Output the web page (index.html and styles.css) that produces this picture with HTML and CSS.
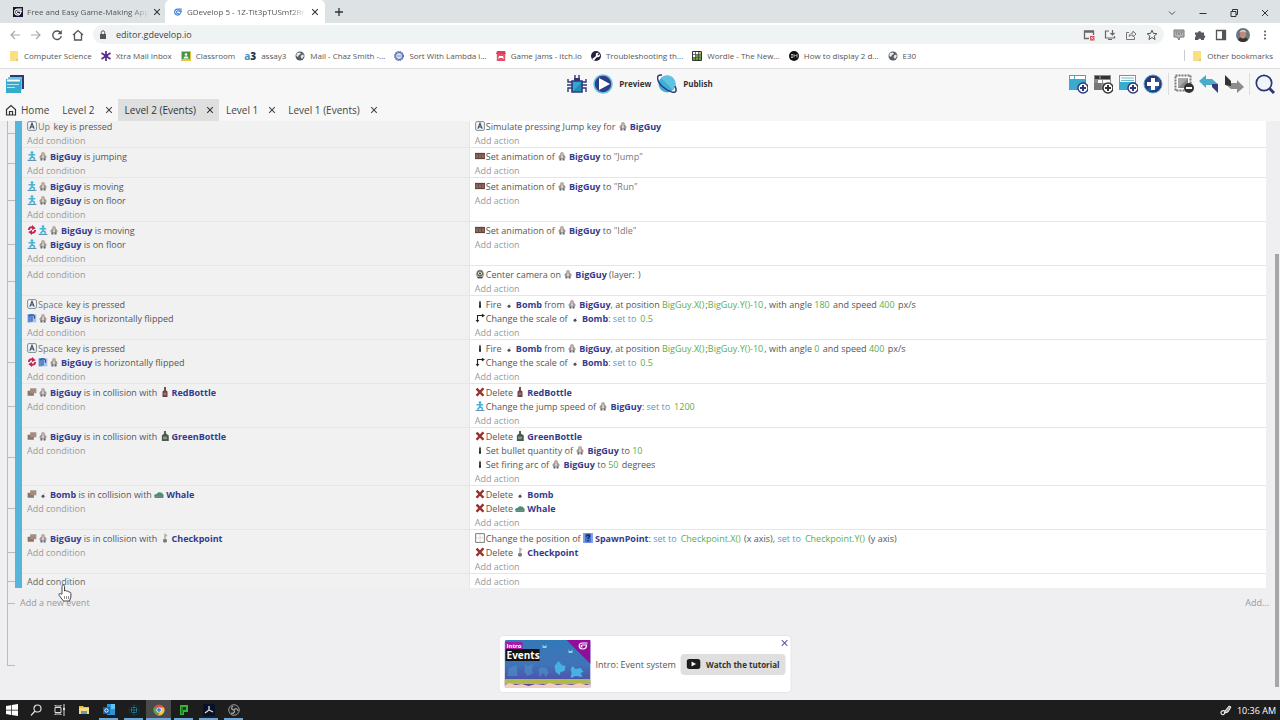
FILE: index.html
```html
<!DOCTYPE html>
<html lang="en">
<head>
    <meta charset="UTF-8">
    <meta name="viewport" content="width=device-width, initial-scale=1.0">
    <title>GDevelop 5</title>
    <link rel="stylesheet" href="styles.css">
</head>
<body>

    <!-- Shared icons -->
    <svg class="sprite" aria-hidden="true">
        <symbol id="x" viewBox="0 0 10 10"><path d="M1.5 1.5l7 7M8.5 1.5l-7 7" fill="none" stroke="currentColor" stroke-width="1.3"/></symbol>
        <symbol id="key" viewBox="0 0 16 16"><rect x="1" y="1" width="14" height="14" rx="2" fill="#f4f7fa" stroke="#77828c" stroke-width="1.5"/><path d="M4.5 12.5L8 3.5l3.500 9M6 9.5h4" fill="none" stroke="#34495c" stroke-width="1.7"/></symbol>
        <symbol id="run" viewBox="0 0 16 16"><path d="M1 15h14" stroke="#4a86ad" stroke-width="1.6"/><circle cx="8" cy="2.5" r="2.2" fill="#45b2d8"/><path d="M8 4v5l3.500 2v3M8 9l-4 4.500M2.500 6H13" fill="none" stroke="#45b2d8" stroke-width="2.6"/></symbol>
        <symbol id="guy" viewBox="0 0 16 16"><path d="M5 6V3l3-2 3 2v3l3 4-2 3H4l-2-3z" fill="#b3aba6"/><path d="M6 3h4v4H6z" fill="#cfa999"/><path d="M7 7h2v4H7z" fill="#ece6e0"/><path d="M4 12h3v3H4zm5 0h3v3H9z" fill="#5a6270"/><path d="M3 9l2-2v4M13 9l-2-2v4" fill="none" stroke="#747d7c"/></symbol>
        <symbol id="invert" viewBox="0 0 16 16"><path d="M3 8c0-4 3-5 6-4M13 8c0 4-3 5-6 4" fill="none" stroke="#c8234d" stroke-width="3"/><path d="M8 0l6 5-6 3zM8 8l-6 3 6 5z" fill="#c8234d"/></symbol>
        <symbol id="flip" viewBox="0 0 16 16"><path d="M1 2h6v13H1z" fill="#5b8bd6"/><path d="M9 2h6v13H9z" fill="#a8c4ed"/><path d="M3 5c3-3 7-3 9 0v4M8 4v10" fill="none" stroke="#285298" stroke-width="2"/></symbol>
        <symbol id="collide" viewBox="0 0 16 16"><path d="M5 2h10v8H5z" fill="#9c9088"/><path d="M1 6h10v8H1z" fill="#84756d"/><path d="M5 6h6v4H5z" fill="#b98770"/></symbol>
        <symbol id="film" viewBox="0 0 16 16"><path d="M0 3h16v10H0z" fill="#5d4540"/><path d="M1 5h4v6H1zm5 0h4v6H6zm5 0h4v6h-4z" fill="#8d685d"/></symbol>
        <symbol id="camera" viewBox="0 0 16 16"><path d="M3 3l3-2h4l3 2 2 6-3 5H4L1 9z" fill="#a3a9a2"/><circle cx="8" cy="7" r="4" fill="#dfe5ca" stroke="#3d4541" stroke-width="1.5"/><circle cx="8" cy="7" r="1.6" fill="#343b39"/><path d="M4 14h8" stroke="#343b39" stroke-width="2"/></symbol>
        <symbol id="bullet" viewBox="0 0 16 16"><path d="M6.5 6L8 2l1.500 4v8h-3z" fill="#191919"/><path d="M8 6v4" stroke="#999"/></symbol>
        <symbol id="bomb" viewBox="0 0 16 16"><circle cx="8" cy="11.5" r="2.4" fill="#4d5154"/><path d="M9 9l1-2" stroke="#999"/></symbol>
        <symbol id="scale" viewBox="0 0 16 16"><path d="M4 12V4h8" fill="none" stroke="#222" stroke-width="1.8"/><path d="M11 1l5 3-5 3zM1 11h6l-3 4z" fill="#222"/></symbol>
        <symbol id="delete" viewBox="0 0 16 16"><path d="M2.5 2.5l11 11.500M13.500 2l-11 12" stroke="#97322e" stroke-width="4"/></symbol>
        <symbol id="redbottle" viewBox="0 0 16 16"><path d="M6.5 0h3v5l2.500 2v9H4V7l2.500-2z" fill="#6b4545"/><path d="M6 9h4v4H6z" fill="#a17470"/></symbol>
        <symbol id="greenbottle" viewBox="0 0 16 16"><path d="M6.5 0h3v4l4.500 3v9H3V7l3.500-3z" fill="#4b5a50"/><path d="M5 9h6v4H5z" fill="#8a978d"/></symbol>
        <symbol id="whale" viewBox="0 0 16 16"><path d="M0 12c0-3 2-4 4-4 3-5 11-3 12 4z" fill="#4e9076"/><path d="M1 13h14" stroke="#315e58" stroke-width="2"/></symbol>
        <symbol id="flag" viewBox="0 0 16 16"><path d="M8 1v10" stroke="#888" stroke-width="1.6"/><path d="M9 2l3 2-3 2z" fill="#c59a80"/><path d="M5 10h6v3l-1 2H6l-1-2z" fill="#737b7d"/></symbol>
        <symbol id="spawn" viewBox="0 0 16 16"><path d="M0 0h16v16H0z" fill="#84a2f0"/><path d="M3 1h10v14H3z" fill="#4674d4"/><path d="M5.5 6c0-4 5-4 5-1 0 2-2.500 2-2.500 4.500M8 11v2" fill="none" stroke="#121c3c" stroke-width="2"/></symbol>
        <symbol id="position" viewBox="0 0 16 16"><path d="M1 1h14v14H1z" fill="#fff" stroke="#737373" stroke-width="1.5"/><path d="M8 2v12M2 8h12" stroke="#aaa" stroke-dasharray="2 1"/></symbol>
        <symbol id="folder" viewBox="0 0 10 10"><path d="M1 0h8v9l-1 1H1z" fill="#f8df83"/><path d="M7 8h2v2H7z" fill="#e7c85b"/></symbol>
        <symbol id="globe" viewBox="0 0 10 10"><circle cx="5" cy="5" r="4.5" fill="#555b60"/><path d="M2 2l3-.5L6 3 4 4 3 6 1.200 5zM6.500 4l2-.5.3 2L7 8 5.500 6z" fill="#e7e9ea"/></symbol>
        <symbol id="gd" viewBox="0 0 12 12"><path d="M10.500 2.500H5.500A3.600 3.600 0 1 0 9 7.200L10 5H6.500M10 4.500H6a1.700 1.700 0 1 0 1 3" fill="none" stroke="currentColor" stroke-width="1.3"/></symbol>
        <symbol id="plus-badge" viewBox="0 0 12 12"><circle cx="6" cy="6" r="5" fill="#fff" stroke="currentColor" stroke-width="1.4"/><path d="M6 3v6M3 6h6" stroke="currentColor" stroke-width="2"/></symbol>
    </svg>

    <div class="window">
        <div class="browser-tabs">
            <div class="browser-tab">
                <svg class="fav dark" viewBox="0 0 12 12"><path d="M0 0h12v12H0z" fill="#171631"/><use href="#gd"/></svg>
                <span class="browser-tab-title">Free and Easy Game-Making App</span>
                <button class="close" aria-label="Close tab"><svg><use href="#x"/></svg></button>
            </div>
            <div class="browser-tab current">
                <svg class="fav"><use href="#gd"/></svg>
                <span class="browser-tab-title">GDevelop 5 - 1Z-Tit3pTUSmf2Rr</span>
                <button class="close" aria-label="Close tab"><svg><use href="#x"/></svg></button>
            </div>
            <button class="new-tab" aria-label="New tab"><svg viewBox="0 0 10 10"><path d="M5 1v8M1 5h8" stroke="#333" stroke-width="1.3"/></svg></button>
            <div class="window-buttons">
                <button aria-label="Search tabs"><svg viewBox="0 0 10 10"><path d="M2 3.5l3 3 3-3" fill="none" stroke="#555"/></svg></button>
                <button aria-label="Minimize"><svg viewBox="0 0 10 10"><path d="M1.5 5.5h7" stroke="#333"/></svg></button>
                <button aria-label="Restore"><svg viewBox="0 0 10 10"><path d="M2 3.5h5v5H2zM3.5 3.5v-2h5v5H7" fill="none" stroke="#333"/></svg></button>
                <button aria-label="Close"><svg viewBox="0 0 10 10"><path d="M2 2l6 6M8 2L2 8" stroke="#333"/></svg></button>
            </div>
        </div>

        <div class="address-row">
            <button aria-label="Back"><svg viewBox="0 0 12 12"><path d="M11 6H2M6 2L2 6l4 4" fill="none" stroke="#aaa" stroke-width="1.2"/></svg></button>
            <button aria-label="Forward"><svg viewBox="0 0 12 12"><path d="M1 6h9M6 2l4 4-4 4" fill="none" stroke="#aaa" stroke-width="1.2"/></svg></button>
            <button aria-label="Reload"><svg viewBox="0 0 12 12"><path d="M10 4.5A4.300 4.300 0 1 0 10.300 7" fill="none" stroke="#555" stroke-width="1.4"/><path d="M10.800 1v4.200H6.600z" fill="#555"/></svg></button>
            <button aria-label="Home page"><svg viewBox="0 0 12 12"><path d="M1 6l5-4.500L11 6M2.500 5v6h7V5" fill="none" stroke="#555" stroke-width="1.3"/></svg></button>
            <div class="address">
                <svg class="lock" viewBox="0 0 8 10"><path d="M1 4h6v5H1z" fill="#555"/><path d="M2.300 4V2.500a1.700 1.700 0 0 1 3.400 0V4" fill="none" stroke="#555"/></svg>
                <input type="text" aria-label="Address" value="editor.gdevelop.io">
                <button aria-label="Pop-ups blocked"><svg viewBox="0 0 12 12"><path d="M6 9.5H1.500V2h9v4M1.500 3h9" fill="none" stroke="#666" stroke-width="1.3"/><path d="M7 7h4.500v4.500H7z" fill="#d34b4f"/><path d="M8 8l2.500 2.500m0-2.500L8 10.500" stroke="#fff" stroke-width=".7"/></svg></button>
                <button aria-label="Install"><svg viewBox="0 0 12 12"><path d="M5 2H1.500v7h9V7M4 10.500h4M8.500 1v5M6.500 4l2 2 2-2" fill="none" stroke="#666" stroke-width="1.2"/></svg></button>
                <button aria-label="Share"><svg viewBox="0 0 12 12"><path d="M4 3.500H1.500v7h8V8M4 7.500c.5-2.500 2-3.500 4-3.500V2l3 3-3 3V6C6 6 5 6.500 4 7.500z" fill="none" stroke="#777"/></svg></button>
                <button aria-label="Bookmark"><svg viewBox="0 0 12 12"><path d="M6 1.200l1.400 3.200 3.500.3-2.700 2.300.9 3.500L6 8.600l-3.100 1.900.9-3.500-2.700-2.300 3.500-.3z" fill="none" stroke="#555"/></svg></button>
            </div>
            <button aria-label="Remote desktop"><svg viewBox="0 0 12 12"><path d="M1 1h10v7H7L6 11 4 8H1z" fill="#b4b6b8" stroke="#777"/><path d="M2.500 3h2m1 0h1m1 0h2M3 5h1m1 0h2m1 0h1" stroke="#666"/></svg></button>
            <button aria-label="Extensions"><svg viewBox="0 0 12 12"><path d="M1 3.500h3a1.600 1.600 0 0 1 3.200 0H10v2.700a1.600 1.600 0 0 1 0 3.100V11H7.200a1.500 1.500 0 0 0-3 0H1V8a1.300 1.300 0 0 0 0-2.500z" fill="#555b60"/></svg></button>
            <button aria-label="Side panel"><svg viewBox="0 0 12 12"><path d="M1.500 1.500h9v9h-9z" fill="#fff" stroke="#555" stroke-width="1.3"/><path d="M7 1.500h4v9H7z" fill="#555"/></svg></button>
            <button class="profile" aria-label="Profile"><svg viewBox="0 0 14 14"><circle cx="7" cy="7" r="7" fill="#69777f"/><path d="M2 12c1-4 9-4 10 0a7 7 0 0 1-10 0z" fill="#333"/><ellipse cx="7" cy="6.5" rx="3" ry="4" fill="#c08a79"/><path d="M3.500 5C4 1 10 1 10.500 5 9 3 5 3 3.500 5z" fill="#ddd"/></svg></button>
            <button aria-label="Menu"><svg viewBox="0 0 12 12"><circle cx="6" cy="2.5" r="1" fill="#555"/><circle cx="6" cy="6" r="1" fill="#555"/><circle cx="6" cy="9.5" r="1" fill="#555"/></svg></button>
        </div>

        <nav class="bookmarks">
            <a href="#"><svg><use href="#folder"/></svg>Computer Science</a>
            <a href="#"><svg viewBox="0 0 10 10"><path d="M5 0v10M.5 2l9 6M9.500 2l-9 6" stroke="#5b2d91" stroke-width="1.7"/><circle cx="5" cy="5" r="2" fill="#5b2d91"/></svg>Xtra Mail Inbox</a>
            <a href="#"><svg viewBox="0 0 10 10"><path d="M0 0h10v10H0z" fill="#e8c73c"/><path d="M1 1h8v7H1z" fill="#469247"/><circle cx="5" cy="3.5" r="1.3" fill="#fff"/><path d="M2.500 7.500c0-3 5-3 5 0z" fill="#fff"/></svg>Classroom</a>
            <a href="#"><span class="a3">a<b>3</b></span>assay3</a>
            <a href="#"><svg><use href="#globe"/></svg>Mail - Chaz Smith -...</a>
            <a href="#"><svg viewBox="0 0 10 10"><circle cx="5" cy="5" r="4.2" fill="none" stroke="#5262a8" stroke-width="1.5" stroke-dasharray="1.5 .7"/><circle cx="5" cy="5" r="3.5" fill="#dce2f5" stroke="#5262a8"/><path d="M3 5h4" stroke="#8290c8"/></svg>Sort With Lambda i...</a>
            <a href="#"><svg viewBox="0 0 10 10"><path d="M1 0h8l1 3H0z" fill="#d9405a"/><path d="M.8 3h8.400v7H.8z" fill="#e2536a"/><path d="M2 8l1-3h4l1 3-1.500-1h-3z" fill="#fff"/></svg>Game jams - itch.io</a>
            <a href="#"><svg viewBox="0 0 10 10"><circle cx="5" cy="5" r="5" fill="#25203e"/><path d="M1 8l4-3c-1-3 1-4 3-3L6.500 3.500l1 1L9 3c.5 2-1 4-3 3L3 9.500z" fill="#fff"/></svg>Troubleshooting th...</a>
            <a href="#"><svg viewBox="0 0 10 10"><path d="M.5.5h9v9h-9z" fill="#fff" stroke="#333"/><path d="M1 7h8v2H1zM4 4h5v2H4z" fill="#65a33c"/><path d="M7 1h2v2H7z" fill="#d8bd41"/><path d="M3.500 0v10M6.500 0v10M0 3.500h10M0 6.500h10" stroke="#333" stroke-width=".7"/></svg>Wordle - The New...</a>
            <a href="#"><svg viewBox="0 0 10 10"><circle cx="5" cy="5" r="5" fill="#111"/><path d="M2 3.500h2m-2 1.500h2m-2 1.500h2M5 6.500v-3l1.500 1.500L8 3.500v3" fill="none" stroke="#ddd" stroke-width=".8"/></svg>How to display 2 d...</a>
            <a href="#"><svg><use href="#globe"/></svg>E30</a>
            <a href="#" class="other"><svg><use href="#folder"/></svg>Other bookmarks</a>
        </nav>

        <header class="toolbar">
            <button aria-label="Project manager"><svg viewBox="0 0 20 20"><path d="M5 1h14v14H5z" fill="#303779"/><path d="M3 3h14v14H3z" fill="#f7f7f7"/><path d="M1 5h15v14H1z" fill="#36aacd"/><path d="M3 3h14v13h-1V5H3z" fill="#68c6df"/><path d="M2 6.500h13" stroke="#fff" stroke-width="2"/><path d="M2 10.500h12M2 13.500h8" stroke="#b6e5f1"/></svg></button>
            <div class="tools">
                <button aria-label="Debugger"><svg viewBox="0 0 20 20"><path d="M5 8H1V5M5 11H0M5 14H1v4M15 8h4V5M15 11h5M15 14h4v4M8 5V1M12 5V1" fill="none" stroke="#303779" stroke-width="1.4"/><path d="M5 7h10v11H5z" fill="#2fa7d2" stroke="#303779" stroke-width="1.6"/><path d="M7 4h6v3H7z" fill="#303779"/><path d="M6 17l8-8v8z" fill="#258bb4"/></svg></button>
                <button><svg viewBox="0 0 20 20"><circle cx="10" cy="10" r="9" fill="#303e87" stroke="#65c3e5" stroke-width="1.5"/><path d="M6 4l11 6-11 6z" fill="#fff"/></svg>Preview</button>
                <button><svg viewBox="0 0 20 20"><circle cx="10" cy="10" r="8.500" fill="#3faed7"/><path d="M10 1.500A8.500 8.500 0 0 1 16 16L4 4a8.500 8.500 0 0 1 6-2.500z" fill="#5dc3e0"/><path d="M5 1C-2 0 0 8 6 13s14 8 13 2l-1-3" fill="none" stroke="#303779" stroke-width="1.5"/></svg>Publish</button>
            </div>
            <div class="tools right">
                <button class="blue" aria-label="Add event"><svg viewBox="0 0 20 20"><path d="M1 1h17v15H1z" fill="#3aabce"/><path d="M2 2h4v3H2zm5 0h10v3H7z" fill="#fff"/><path d="M8 16L18 6v10z" fill="#2c93b5"/><use href="#plus-badge" x="9" y="8" width="12" height="12"/></svg></button>
                <button class="black" aria-label="Add sub-event"><svg viewBox="0 0 20 20"><path d="M1 1h17v15H1z" fill="#8c8c8c"/><path d="M2 2h15v3H2z" fill="#333"/><path d="M7 2v3" stroke="#aaa"/><path d="M5 6h4v3H5zm5 0h7v3h-7z" fill="#fff"/><path d="M1 9h7v7H1z" fill="#777"/><use href="#plus-badge" x="9" y="8" width="12" height="12"/></svg></button>
                <button class="blue" aria-label="Add comment"><svg viewBox="0 0 20 20"><path d="M1 1h17v15H1z" fill="#3aabce"/><path d="M2 2h15v6H2z" fill="#fff"/><path d="M3 4h13M3 6.500h13" stroke="#6ab9cf"/><path d="M8 16l8-8h2v8z" fill="#2c93b5"/><use href="#plus-badge" x="9" y="8" width="12" height="12"/></svg></button>
                <button aria-label="Add other event"><svg viewBox="0 0 20 20"><circle cx="10" cy="10" r="9" fill="#303779" stroke="#4aa6cc" stroke-width="1"/><path d="M16 4a9 9 0 0 1-12 12z" fill="#24649e"/><path d="M10 4v12M4 10h12" stroke="#fff" stroke-width="4"/></svg></button>
                <span class="divider"></span>
                <button aria-label="Delete selection"><svg viewBox="0 0 20 20"><path d="M1.500 1.500h15v15h-15z" fill="#fff" stroke="#777" stroke-width="2" stroke-dasharray="2 1"/><path d="M4 4h10v10H4z" fill="#aaa"/><path d="M14 4v10H4z" fill="#888"/><circle cx="15" cy="14" r="5" fill="#333"/><path d="M12 14h6" stroke="#fff" stroke-width="2"/></svg></button>
                <button aria-label="Undo"><svg viewBox="0 0 20 20"><path d="M0 7l7-6v4h6l6 5v8l-6-7H7v3z" fill="#49acc9"/><path d="M13 10h6v9l-6-6z" fill="#343a7b"/></svg></button>
                <button aria-label="Redo"><svg viewBox="0 0 20 20"><path d="M20 13l-7 6v-4H7l-6-5V2l6 7h6V6z" fill="#8c8c8c"/><path d="M1 1l6 6v5l-6-1z" fill="#333"/></svg></button>
                <span class="divider"></span>
                <button aria-label="Search"><svg viewBox="0 0 20 20"><path d="M14 14l5 5" stroke="#303779" stroke-width="3"/><circle cx="9" cy="9" r="7.7" fill="#eff5f9" stroke="#303779" stroke-width="1.7"/></svg></button>
            </div>
        </header>

        <div class="editor-tabs">
            <button class="home"><svg viewBox="0 0 12 12"><path d="M1.500 5.500L6 1.500l4.500 4V11h-9zM4.500 11V7.500h3V11" fill="none" stroke="#333" stroke-width="1.2"/></svg>Home</button>
            <div class="editor-tab"><button>Level 2</button><button class="close" aria-label="Close Level 2"><svg><use href="#x"/></svg></button></div>
            <div class="editor-tab current"><button>Level 2 (Events)</button><button class="close" aria-label="Close Level 2 (Events)"><svg><use href="#x"/></svg></button></div>
            <div class="editor-tab"><button>Level 1</button><button class="close" aria-label="Close Level 1"><svg><use href="#x"/></svg></button></div>
            <div class="editor-tab"><button>Level 1 (Events)</button><button class="close" aria-label="Close Level 1 (Events)"><svg><use href="#x"/></svg></button></div>
        </div>

        <main class="sheet">
            <div class="events">
                <div class="event">
                    <div class="conditions">
                        <p><svg><use href="#key"/></svg><i>Up</i> key is pressed</p>
                        <button>Add condition</button>
                    </div>
                    <div class="actions">
                        <p><svg><use href="#key"/></svg>Simulate pressing Jump key for <svg><use href="#guy"/></svg><b>BigGuy</b></p>
                        <button>Add action</button>
                    </div>
                </div>
                <div class="event">
                    <div class="conditions">
                        <p><svg><use href="#run"/></svg><svg><use href="#guy"/></svg><b>BigGuy</b> is jumping</p>
                        <button>Add condition</button>
                    </div>
                    <div class="actions">
                        <p><svg><use href="#film"/></svg>Set animation of <svg><use href="#guy"/></svg><b>BigGuy</b> to <i>"Jump"</i></p>
                        <button>Add action</button>
                    </div>
                </div>
                <div class="event">
                    <div class="conditions">
                        <p><svg><use href="#run"/></svg><svg><use href="#guy"/></svg><b>BigGuy</b> is moving</p>
                        <p><svg><use href="#run"/></svg><svg><use href="#guy"/></svg><b>BigGuy</b> is on floor</p>
                        <button>Add condition</button>
                    </div>
                    <div class="actions">
                        <p><svg><use href="#film"/></svg>Set animation of <svg><use href="#guy"/></svg><b>BigGuy</b> to <i>"Run"</i></p>
                        <button>Add action</button>
                    </div>
                </div>
                <div class="event">
                    <div class="conditions">
                        <p><svg><use href="#invert"/></svg><svg><use href="#run"/></svg><svg><use href="#guy"/></svg><b>BigGuy</b> is moving</p>
                        <p><svg><use href="#run"/></svg><svg><use href="#guy"/></svg><b>BigGuy</b> is on floor</p>
                        <button>Add condition</button>
                    </div>
                    <div class="actions">
                        <p><svg><use href="#film"/></svg>Set animation of <svg><use href="#guy"/></svg><b>BigGuy</b> to <i>"Idle"</i></p>
                        <button>Add action</button>
                    </div>
                </div>
                <div class="event">
                    <div class="conditions">
                        <button>Add condition</button>
                    </div>
                    <div class="actions">
                        <p><svg><use href="#camera"/></svg>Center camera on <svg><use href="#guy"/></svg><b>BigGuy</b> (layer: <i></i>)</p>
                        <button>Add action</button>
                    </div>
                </div>
                <div class="event">
                    <div class="conditions">
                        <p><svg><use href="#key"/></svg><i>Space</i> key is pressed</p>
                        <p><svg><use href="#flip"/></svg><svg><use href="#guy"/></svg><b>BigGuy</b> is horizontally flipped</p>
                        <button>Add condition</button>
                    </div>
                    <div class="actions">
                        <p><svg><use href="#bullet"/></svg>Fire <svg><use href="#bomb"/></svg><b>Bomb</b> from <svg><use href="#guy"/></svg><b>BigGuy</b>, at position <em>BigGuy.X()</em>;<em>BigGuy.Y()-10</em>, with angle <em>180</em> and speed <em>400</em> px/s</p>
                        <p><svg><use href="#scale"/></svg>Change the scale of <svg><use href="#bomb"/></svg><b>Bomb</b>: <span class="op">set to</span><em>0.5</em></p>
                        <button>Add action</button>
                    </div>
                </div>
                <div class="event">
                    <div class="conditions">
                        <p><svg><use href="#key"/></svg><i>Space</i> key is pressed</p>
                        <p><svg><use href="#invert"/></svg><svg><use href="#flip"/></svg><svg><use href="#guy"/></svg><b>BigGuy</b> is horizontally flipped</p>
                        <button>Add condition</button>
                    </div>
                    <div class="actions">
                        <p><svg><use href="#bullet"/></svg>Fire <svg><use href="#bomb"/></svg><b>Bomb</b> from <svg><use href="#guy"/></svg><b>BigGuy</b>, at position <em>BigGuy.X()</em>;<em>BigGuy.Y()-10</em>, with angle <em>0</em> and speed <em>400</em> px/s</p>
                        <p><svg><use href="#scale"/></svg>Change the scale of <svg><use href="#bomb"/></svg><b>Bomb</b>: <span class="op">set to</span><em>0.5</em></p>
                        <button>Add action</button>
                    </div>
                </div>
                <div class="event">
                    <div class="conditions">
                        <p><svg><use href="#collide"/></svg><svg><use href="#guy"/></svg><b>BigGuy</b> is in collision with <svg><use href="#redbottle"/></svg><b>RedBottle</b></p>
                        <button>Add condition</button>
                    </div>
                    <div class="actions">
                        <p><svg><use href="#delete"/></svg>Delete <svg><use href="#redbottle"/></svg><b>RedBottle</b></p>
                        <p><svg><use href="#run"/></svg>Change the jump speed of <svg><use href="#guy"/></svg><b>BigGuy</b>: <span class="op">set to</span><em>1200</em></p>
                        <button>Add action</button>
                    </div>
                </div>
                <div class="event">
                    <div class="conditions">
                        <p><svg><use href="#collide"/></svg><svg><use href="#guy"/></svg><b>BigGuy</b> is in collision with <svg><use href="#greenbottle"/></svg><b>GreenBottle</b></p>
                        <button>Add condition</button>
                    </div>
                    <div class="actions">
                        <p><svg><use href="#delete"/></svg>Delete <svg><use href="#greenbottle"/></svg><b>GreenBottle</b></p>
                        <p><svg><use href="#bullet"/></svg>Set bullet quantity of <svg><use href="#guy"/></svg><b>BigGuy</b> to <em>10</em></p>
                        <p><svg><use href="#bullet"/></svg>Set firing arc of <svg><use href="#guy"/></svg><b>BigGuy</b> to <em>50</em> degrees</p>
                        <button>Add action</button>
                    </div>
                </div>
                <div class="event">
                    <div class="conditions">
                        <p><svg><use href="#collide"/></svg><svg><use href="#bomb"/></svg><b>Bomb</b> is in collision with <svg><use href="#whale"/></svg><b>Whale</b></p>
                        <button>Add condition</button>
                    </div>
                    <div class="actions">
                        <p><svg><use href="#delete"/></svg>Delete <svg><use href="#bomb"/></svg><b>Bomb</b></p>
                        <p><svg><use href="#delete"/></svg>Delete <svg><use href="#whale"/></svg><b>Whale</b></p>
                        <button>Add action</button>
                    </div>
                </div>
                <div class="event">
                    <div class="conditions">
                        <p><svg><use href="#collide"/></svg><svg><use href="#guy"/></svg><b>BigGuy</b> is in collision with <svg><use href="#flag"/></svg><b>Checkpoint</b></p>
                        <button>Add condition</button>
                    </div>
                    <div class="actions">
                        <p><svg><use href="#position"/></svg>Change the position of <svg><use href="#spawn"/></svg><b>SpawnPoint</b>: <span class="op">set to</span><em>Checkpoint.X()</em> (x axis), <span class="op">set to</span><em>Checkpoint.Y()</em> (y axis)</p>
                        <p><svg><use href="#delete"/></svg>Delete <svg><use href="#flag"/></svg><b>Checkpoint</b></p>
                        <button>Add action</button>
                    </div>
                </div>
                <div class="event empty">
                    <div class="conditions">
                        <button class="hover">Add condition</button>
                    </div>
                    <div class="actions">
                        <button>Add action</button>
                    </div>
                    <svg class="pointer" viewBox="0 0 14 18"><path d="M4 10V2.500c0-2 2.500-2 2.500 0V7c1-1 2-.5 2.300.4 1-.6 2 0 2.100.8 1.100-.4 2 .2 2 1.300V13l-1.400 4H5.500L1.200 11.500c-1-1.600.8-2.600 2-1.200z" fill="#fff" stroke="#333" stroke-width=".9"/><path d="M6.500 12v3M8.500 12v3M10.500 12v3" stroke="#666" stroke-width=".7"/></svg>
                </div>
                <div class="add-row">
                    <button>Add a new event</button>
                    <button>Add...</button>
                </div>
            </div>

            <aside class="tutorial">
                <svg class="thumb" viewBox="0 0 86 48">
                    <defs><linearGradient id="sky" x2="0" y2="1"><stop stop-color="#3279b9"/><stop offset=".5" stop-color="#4074b8"/><stop offset="1" stop-color="#5542a3"/></linearGradient></defs>
                    <rect width="86" height="48" rx="2" fill="url(#sky)"/>
                    <path d="M4 28l8-3 1 11H3zM20 24l3 2 6-2-2 6 2 3-6 3-3-4zM34 29l3-2 5 1 2 5-3 4-2-4-4 4z" fill="#4d8fc9" opacity=".65"/>
                    <path d="M50 26l4-5 3 4 4 1-1 5-4 1-1 3-4-3zM66 29l2-3 3 3 5-1 3 4-3 1 2 4-7-1-5 2 1-5z" fill="#45b2e3"/>
                    <path d="M38 4l1 2h2l1-2v4h-4zM64 9l1 2h2l1-2v4h-4z" fill="#8fd0ea"/>
                    <path d="M0 39h86v5H0z" fill="#b1b94b"/><path d="M0 45l5-2 6 2 6-1 7 2 7-2 8 1 6-2 8 2 7-1 7 1 8-2 7 2 4-1v4H0z" fill="#f0cdbd"/>
                    <path d="M62 0h24v24z" fill="#930c9a"/>
                    <path d="M83 3h-5c-5 0-4 6 0 6 3 0 4-2 4-4h-4c-2 0-2 2 0 2" fill="none" stroke="#fff" stroke-width="1.2"/>
                    <path d="M1 2h17v7H1z" fill="#a719a9"/><path d="M1 9h34v12H1z" fill="#111"/>
                    <text class="thumb-small" x="2" y="8">Intro</text>
                    <text class="thumb-large" x="2" y="19">Events</text>
                </svg>
                <span>Intro: Event system</span>
                <button class="watch"><svg viewBox="0 0 14 10"><rect width="14" height="10" rx="3" fill="#1d1d1d"/><path d="M5 2.500l4.500 2.500L5 7.500z" fill="#fff"/></svg>Watch the tutorial</button>
                <button class="dismiss" aria-label="Dismiss"><svg><use href="#x"/></svg></button>
            </aside>
            <span class="scroll-thumb"></span>
        </main>

        <footer class="taskbar">
            <button aria-label="Start"><svg viewBox="0 0 12 12"><path d="M0 2l5-.8v4.500H0zM5.700 1L12 0v5.700H5.700zM0 6.400h5v4.500L0 10zM5.700 6.400H12V12l-6.300-.9z" fill="#fff"/></svg></button>
            <button aria-label="Search"><svg viewBox="0 0 12 12"><circle cx="7.5" cy="4.5" r="3.5" fill="none" stroke="#ddd" stroke-width="1.2"/><path d="M5 7L1 11.500" stroke="#ddd" stroke-width="1.2"/></svg></button>
            <button aria-label="Task view"><svg viewBox="0 0 12 12"><path d="M1 3.500h6v5H1zM1 1v1h6V1M1 11v-1h6v1M10 0v12" fill="none" stroke="#ddd"/><path d="M9 4h2v2H9z" fill="#ddd"/></svg></button>
            <button aria-label="File Explorer"><svg viewBox="0 0 12 12"><path d="M1 2h4l1 1h5v7H1z" fill="#e7bd4b"/><path d="M1 4h10v6H1z" fill="#f6dc80"/><path d="M3 7h6v3H3z" fill="#5ba0bc"/></svg></button>
            <button class="running" aria-label="Outlook"><svg viewBox="0 0 12 12"><path d="M4 0h8v11H4z" fill="#2a96d7"/><path d="M8 0h4v5H8z" fill="#65c4f0"/><path d="M0 3h7v7H0z" fill="#0b65b5"/><circle cx="3.5" cy="6.5" r="1.7" fill="none" stroke="#fff"/></svg></button>
            <button class="running" aria-label="Debugger tool"><svg viewBox="0 0 12 12"><circle cx="6" cy="6" r="5" fill="#070c10" stroke="#173e45"/><path d="M6 1.500v9M2 6h8M3.500 3.500h5v5h-5z" fill="none" stroke="#338291" stroke-width=".8"/></svg></button>
            <button class="running current" aria-label="Chrome"><svg viewBox="0 0 12 12"><circle cx="6" cy="6" r="5.5" fill="#e54a3e"/><path d="M1.200 3.300L6 6l-1 5.400A5.500 5.500 0 0 1 1.200 3.300z" fill="#4ca95b"/><path d="M6 3.500h4.900A5.500 5.500 0 0 1 5 11.400L7.500 7z" fill="#f0c347"/><circle cx="6" cy="6" r="2.6" fill="#fff"/><circle cx="6" cy="6" r="2" fill="#4388dc"/></svg></button>
            <button class="running" aria-label="PaperCut"><svg viewBox="0 0 12 12"><path d="M2 1h8v7H6v3H2z" fill="#38b539"/><path d="M5 3h3v3H5z" fill="#124216"/><path d="M4 3v7" stroke="#124216"/></svg></button>
            <button class="running" aria-label="Code editor"><svg viewBox="0 0 12 12"><path d="M0 0h12v12H0z" fill="#071228"/><path d="M6 2v4l-4 3M6 6l4 2" fill="none" stroke="#ddd" stroke-width="1.3"/></svg></button>
            <button class="running" aria-label="OBS Studio"><svg viewBox="0 0 12 12"><circle cx="6" cy="6" r="5.3" fill="#252525" stroke="#999"/><path d="M6 6C3 6 3 3 5 2M6 6c1.500-2.500 4-1 4 1M6 6c1.500 2.500-1 4-3 3" fill="none" stroke="#aaa" stroke-width="1.2"/></svg></button>
            <svg class="pen" viewBox="0 0 12 12"><path d="M5 7l4-5 2 1-3 5-3 1z" fill="#aaa" stroke="#eee"/><path d="M5 7c-3-1-5 1-3.500 3S6 9 4 8" fill="none" stroke="#eee" stroke-width="1.2"/></svg>
            <time>10:36 AM</time>
        </footer>
    </div>

</body>
</html>
```

FILE: styles.css
```css
* {
    box-sizing: border-box;
}
body {
    margin: 0;
    font-family: "Open Sans", "Noto Sans", sans-serif;
    font-size: 9px;
    color: #555;
}
button {
    display: flex;
    align-items: center;
    padding: 0;
    border: none;
    background: none;
    font: inherit;
    color: inherit;
    cursor: pointer;
}
svg {
    display: block;
    flex: none;
    width: 10px;
    height: 10px;
}
.sprite {
    position: absolute;
    width: 0;
    height: 0;
}
.window {
    display: flex;
    flex-direction: column;
    height: 100vh;
}

/* Browser */
.browser-tabs {
    display: flex;
    align-items: flex-end;
    height: 23px;
    background: #dde2e4;
    font-size: 8px;
}
.browser-tab {
    display: flex;
    align-items: center;
    gap: 4px;
    width: 165px;
    height: 23px;
    padding: 0 6px 0 13px;
}
.browser-tab.current {
    width: 160px;
    padding-left: 8px;
    border-radius: 5px 5px 0 0;
    background: #fff;
}
.browser-tab-title {
    flex: 1;
    white-space: nowrap;
    mask-image: linear-gradient(to right, #000 85%, transparent);
}
.fav {
    color: #3d83d4;
}
.fav.dark {
    color: #fff;
}
.close svg {
    width: 8px;
    height: 8px;
}
.browser-tab .close {
    color: #333;
}
.new-tab {
    height: 23px;
    margin-left: 9px;
}
.window-buttons {
    display: flex;
    gap: 21px;
    height: 20px;
    margin-left: auto;
    padding-right: 10px;
}
.address-row {
    display: flex;
    align-items: center;
    gap: 9px;
    height: 23px;
    padding: 0 9px;
    background: #fff;
}
.address-row button svg {
    width: 12px;
    height: 12px;
}
.address-row .profile svg {
    width: 14px;
    height: 14px;
}
.address {
    display: flex;
    flex: 1;
    align-items: center;
    gap: 9px;
    height: 19px;
    padding: 0 6px;
    border-radius: 10px;
    background: #f0f3f4;
}
.lock {
    width: 8px;
}
.address input {
    flex: 1;
    min-width: 0;
    padding: 0;
    border: none;
    outline: none;
    background: none;
    font: inherit;
    color: #444;
}
.bookmarks {
    display: flex;
    align-items: center;
    gap: 9px;
    height: 23px;
    padding: 0 7px 3px 9px;
    border-bottom: 1px solid #dcdcdc;
    background: #fff;
    font-size: 8px;
}
.bookmarks a {
    display: flex;
    align-items: center;
    gap: 5px;
    white-space: nowrap;
    text-decoration: none;
    color: #555;
}
.bookmarks .other {
    margin-left: auto;
    padding-left: 7px;
    border-left: 1px solid #ccc;
}
.a3 {
    font-size: 10px;
    line-height: 10px;
    font-weight: bold;
    color: #3b91c9;
}
.a3 b {
    color: #25364c;
}

/* Editor toolbar */
.toolbar {
    display: grid;
    grid-template-columns: 1fr auto 1fr;
    align-items: center;
    height: 30px;
    padding: 0 5px 1px;
    background: #f7f7f7;
}
.toolbar svg {
    width: 20px;
    height: 20px;
}
.tools {
    display: flex;
    align-items: center;
    gap: 6px;
    font-size: 8px;
    font-weight: bold;
    color: #333;
}
.tools button {
    gap: 6px;
}
.tools.right {
    justify-content: flex-end;
    gap: 5px;
}
.tools .blue {
    color: #303779;
}
.divider {
    width: 1px;
    height: 22px;
    background: #ddd;
}
.editor-tabs {
    display: flex;
    height: 22px;
    background: #f7f7f7;
    font-size: 10px;
    color: #444;
}
.home {
    gap: 4px;
    padding: 0 6px 0 5px;
}
.home svg {
    width: 12px;
    height: 12px;
}
.editor-tab {
    display: flex;
    gap: 10px;
    padding: 0 5px 0 7px;
}
.editor-tab.current {
    background: #dfdfdf;
    color: #333;
}

/* Events sheet */
.sheet {
    position: relative;
    flex: 1;
    overflow: hidden;
    background: #efeff2;
}
.events {
    height: 548px;
    margin: -3px 14px 0 7px;
    border-left: 1px solid #bbb;
    background: linear-gradient(#bbb, #bbb) left bottom / 7px 1px no-repeat;
}
.event {
    position: relative;
    display: grid;
    grid-template-columns: 36fr 64fr;
    margin-left: 7px;
    border-left: 7px solid #55b5da;
}
.event::before,
.add-row::before {
    content: "";
    position: absolute;
    top: 50%;
    left: -14px;
    width: 7px;
    height: 1px;
    background: #bbb;
}
.add-row::before {
    left: -12px;
}
.conditions,
.actions {
    padding: 1px 5px 0;
    border-bottom: 1px solid #e6e6e8;
    background: #fff;
}
.conditions {
    border-right: 1px solid #e6e6e8;
    background: #f1f1f2;
}
.empty .conditions,
.empty .actions {
    padding-top: 0;
    border-bottom: none;
}
.event p {
    display: flex;
    align-items: center;
    height: 14px;
    margin: 0;
    white-space: pre;
}
.event p svg {
    margin-right: 1px;
}
.event b {
    margin-left: 1px;
    color: #353b8c;
}
.event i {
    padding-right: 1px;
    font-style: normal;
    color: #777;
}
.event em {
    padding-right: 1px;
    font-style: normal;
    color: #58ae52;
}
.op {
    padding-right: 4px;
    color: #5596c8;
}
.event button {
    height: 14px;
    color: #999;
}
.event .hover {
    color: #666;
}
.event .pointer {
    position: absolute;
    top: 10px;
    left: 36px;
    z-index: 1;
    width: 14px;
    height: 18px;
}
.add-row {
    position: relative;
    display: flex;
    justify-content: space-between;
    margin: 8px -3px 0 12px;
    color: #999;
}
.tutorial {
    position: absolute;
    bottom: 7px;
    left: 50%;
    display: flex;
    align-items: center;
    gap: 5px;
    height: 58px;
    margin-left: 5px;
    padding: 0 5px;
    border: 1px solid #e5e5e8;
    border-radius: 4px;
    background: #fff;
    white-space: nowrap;
    transform: translateX(-50%);
}
.thumb {
    width: 86px;
    height: 48px;
}
.thumb-small,
.thumb-large {
    font-size: 6px;
    font-weight: bold;
    fill: #fff;
}
.thumb-large {
    font-size: 10px;
}
.watch {
    gap: 5px;
    height: 21px;
    padding: 0 6px;
    border-radius: 4px;
    background: #dfdfdf;
    font-size: 8px;
    font-weight: bold;
    color: #333;
}
.watch svg {
    width: 14px;
}
.dismiss {
    position: absolute;
    top: 3px;
    right: 2px;
    color: #6c4fb3;
}
.dismiss svg {
    width: 8px;
    height: 8px;
}
.scroll-thumb {
    position: absolute;
    top: 133px;
    right: 1px;
    bottom: 13px;
    width: 4px;
    background: #a6a6a6;
}

/* Taskbar */
.taskbar {
    display: flex;
    height: 20px;
    background: #1d1d1d;
    color: #fff;
}
.taskbar svg {
    width: 12px;
    height: 12px;
}
.taskbar button {
    justify-content: center;
    width: 24px;
}
.taskbar .running {
    width: 25px;
    background: linear-gradient(#6fa8d6, #6fa8d6) center bottom / 19px 2px no-repeat;
}
.taskbar .current {
    background-color: #4a4a4a;
    background-size: 25px 2px;
}
.pen {
    align-self: center;
    margin: 0 5px 0 auto;
}
time {
    align-self: center;
    padding-right: 4px;
    font-size: 9px;
}
```
